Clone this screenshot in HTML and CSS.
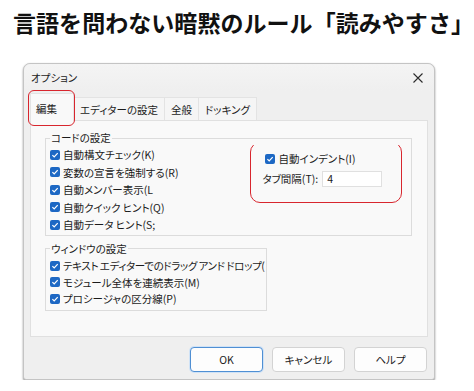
FILE: index.html
```html
<!DOCTYPE html>
<html lang="ja">
<head>
<meta charset="utf-8">
<title>オプション</title>
<link rel="stylesheet" href="styles.css">
</head>
<body>
<h1 class="headline">言語を問わない暗黙のルール「読みやすさ」</h1>
<div class="dialog">
  <div class="titlebar">
    <span class="title">オプション</span>
    <svg class="close" width="10" height="10" viewBox="0 0 10 10"><path d="M0.5 0.5L9.5 9.5M9.5 0.5L0.5 9.5" stroke="#2b2b2b" stroke-width="1.1" fill="none"/></svg>
  </div>
  <div class="dlg-body">
    <div class="tabs">
      <div class="tab active">編集</div>
      <div class="tab">エディターの設定</div>
      <div class="tab">全般</div>
      <div class="tab">ドッキング</div>
    </div>
    <div class="panel">
      <fieldset class="group group-code">
        <legend>コードの設定</legend>
        <div class="code-cols">
          <div class="checklist">
            <div class="check"><svg class="cb" viewBox="0 0 10 10"><rect width="10" height="10" rx="2" fill="#1d68c4"/><path d="M2.4 5.2L4.2 7L7.7 3.2" stroke="#fff" stroke-width="1.2" fill="none"/></svg><span>自動構文チェック(K)</span></div>
            <div class="check"><svg class="cb" viewBox="0 0 10 10"><rect width="10" height="10" rx="2" fill="#1d68c4"/><path d="M2.4 5.2L4.2 7L7.7 3.2" stroke="#fff" stroke-width="1.2" fill="none"/></svg><span>変数の宣言を強制する(R)</span></div>
            <div class="check"><svg class="cb" viewBox="0 0 10 10"><rect width="10" height="10" rx="2" fill="#1d68c4"/><path d="M2.4 5.2L4.2 7L7.7 3.2" stroke="#fff" stroke-width="1.2" fill="none"/></svg><span>自動メンバー表示(L</span></div>
            <div class="check"><svg class="cb" viewBox="0 0 10 10"><rect width="10" height="10" rx="2" fill="#1d68c4"/><path d="M2.4 5.2L4.2 7L7.7 3.2" stroke="#fff" stroke-width="1.2" fill="none"/></svg><span>自動クイック ヒント(Q)</span></div>
            <div class="check"><svg class="cb" viewBox="0 0 10 10"><rect width="10" height="10" rx="2" fill="#1d68c4"/><path d="M2.4 5.2L4.2 7L7.7 3.2" stroke="#fff" stroke-width="1.2" fill="none"/></svg><span>自動データ ヒント(S;</span></div>
          </div>
          <div class="indent-box">
            <div class="check indent-check"><svg class="cb" viewBox="0 0 10 10"><rect width="10" height="10" rx="2" fill="#1d68c4"/><path d="M2.4 5.2L4.2 7L7.7 3.2" stroke="#fff" stroke-width="1.2" fill="none"/></svg><span>自動インデント(I)</span></div>
            <div class="tabwidth"><span>タブ間隔(T):</span><span class="input">4</span></div>
          </div>
        </div>
      </fieldset>
      <fieldset class="group group-window">
        <legend>ウィンドウの設定</legend>
        <div class="checklist tight">
          <div class="check"><svg class="cb" viewBox="0 0 10 10"><rect width="10" height="10" rx="2" fill="#1d68c4"/><path d="M2.4 5.2L4.2 7L7.7 3.2" stroke="#fff" stroke-width="1.2" fill="none"/></svg><span class="narrow">テキスト エディターでのドラッグ アンド ドロップ(</span></div>
          <div class="check"><svg class="cb" viewBox="0 0 10 10"><rect width="10" height="10" rx="2" fill="#1d68c4"/><path d="M2.4 5.2L4.2 7L7.7 3.2" stroke="#fff" stroke-width="1.2" fill="none"/></svg><span>モジュール全体を連続表示(M)</span></div>
          <div class="check"><svg class="cb" viewBox="0 0 10 10"><rect width="10" height="10" rx="2" fill="#1d68c4"/><path d="M2.4 5.2L4.2 7L7.7 3.2" stroke="#fff" stroke-width="1.2" fill="none"/></svg><span>プロシージャの区分線(P)</span></div>
        </div>
      </fieldset>
    </div>
    <div class="buttons">
      <div class="btn default">OK</div>
      <div class="btn">キャンセル</div>
      <div class="btn">ヘルプ</div>
    </div>
  </div>
</div>
</body>
</html>
```

FILE: styles.css
```css
* { box-sizing: border-box; }
body {
  margin: 0;
  background: #ffffff;
  font-family: "Noto Sans CJK JP", "Noto Sans", sans-serif;
  color: #1b1b1b;
}
.headline {
  margin: 0;
  padding: 11px 0 0 13px;
  font-size: 23px;
  line-height: 23px;
  font-weight: 700;
  letter-spacing: 0.05px;
  color: #111111;
  white-space: nowrap;
}
.dialog {
  margin: 29px 0 0 23px;
  width: 412px;
  height: 317px;
  background: #efefef;
  border: 1px solid #c4c4c4;
  border-radius: 7px 7px 3px 3px;
  box-shadow: 0 1px 2px rgba(0,0,0,0.45);
  font-size: 10.5px;
  font-feature-settings: "palt";
}
.titlebar {
  height: 27px;
  display: flex;
  align-items: center;
  justify-content: space-between;
  padding: 0 11px 0 7px;
  background: linear-gradient(#f4f4f4, #efefef);
  border-radius: 7px 7px 0 0;
}
.title { line-height: 14px; }
.close { display: block; }
.dlg-body {
  padding: 0 6px 7px 6px;
}
.tabs {
  height: 29px;
  display: flex;
  align-items: flex-end;
  position: relative;
  z-index: 2;
}
.tab {
  height: 23px;
  line-height: 24px;
  padding: 0 6px;
  background: #f5f5f5;
  border: 1px solid #e3e3e3;
  border-bottom: none;
  margin-right: -1px;
  white-space: nowrap;
}
.tab.active {
  position: relative;
  height: 28px;
  line-height: 30px;
  width: 44px;
  padding: 0 0 0 5px;
  background: #f9f9f9;
  margin-bottom: -1px;
  z-index: 3;
}
.tab.active::after {
  content: "";
  position: absolute;
  left: -3px;
  top: -4px;
  width: 45px;
  height: 34px;
  border: 1.5px solid #d8262e;
  border-radius: 6px;
}
.panel {
  height: 217px;
  background: #f9f9f9;
  border: 1px solid #e0e0e0;
  padding: 0 0 0 14px;
  position: relative;
  z-index: 1;
}
.group {
  margin: 0;
  padding: 1px 0 1px 4px;
  border: 1px solid #dcdcdc;
  min-width: 0;
  overflow: hidden;
}
.group legend {
  padding: 0 1px;
  line-height: 14px;
  font-size: 10.5px;
}
.group-code {
  width: 367px;
  margin-top: 10px;
}
.group-window {
  width: 222px;
  margin-top: 6px;
  padding-top: 2px;
  padding-bottom: 3px;
}
.code-cols {
  display: flex;
  align-items: flex-start;
}
.checklist {
  display: flex;
  flex-direction: column;
}
.check {
  height: 17.5px;
  display: flex;
  align-items: center;
  white-space: nowrap;
}
.checklist.tight .check { height: 16.5px; }
.narrow {
  letter-spacing: -0.35px;
  word-spacing: -0.4px;
}
.cb {
  width: 10px;
  height: 10px;
  flex: none;
  margin-right: 3px;
  display: block;
}
.indent-box {
  margin: -4px 9px 0 auto;
  width: 152px;
  height: 61px;
  border: 1.5px solid #d8262e;
  border-radius: 10px;
  padding: 7px 0 0 11.5px;
}
.indent-check {
  height: 17px;
  margin-left: 2px;
}
.indent-check .cb { margin-right: 4px; }
.tabwidth {
  margin-top: 2.5px;
  height: 18px;
  display: flex;
  align-items: center;
  gap: 4px;
}
.input {
  width: 60px;
  height: 16px;
  background: #ffffff;
  border: 1px solid #e0e0e0;
  padding-left: 4px;
  line-height: 14px;
}
.buttons {
  margin-top: 10px;
  display: flex;
  justify-content: flex-end;
  gap: 9px;
  padding-right: 1px;
}
.btn {
  width: 73px;
  height: 25px;
  background: #fdfdfd;
  border: 1px solid #d3d3d3;
  border-radius: 4px;
  display: flex;
  align-items: center;
  justify-content: center;
  line-height: 14px;
}
.btn.default {
  border: 1px solid #4f8fd3;
  box-shadow: 0 0 0 1px #cfe2f6;
}
```
